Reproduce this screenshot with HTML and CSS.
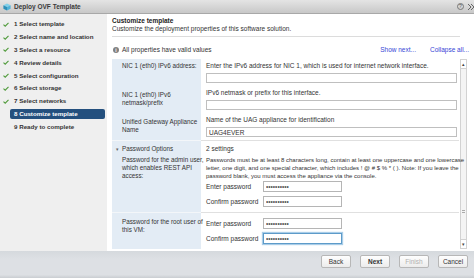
FILE: index.html
```html
<!DOCTYPE html>
<html lang="en">
<head>
    <meta charset="UTF-8">
    <meta name="viewport" content="width=device-width, initial-scale=1.0">
    <title>Deploy OVF Template</title>
    <link rel="stylesheet" href="styles.css">
</head>
<body>
    <div class="window">
        <!-- Title bar -->
        <div class="titlebar">
            <svg class="app-icon" viewBox="0 0 10 10">
                <polygon points="5,0.5 9.5,2.8 5,5 0.5,2.8" fill="#7fd0ea"/>
                <polygon points="0.5,2.8 5,5 5,9.5 0.5,7.2" fill="#2e8fb8"/>
                <polygon points="9.5,2.8 5,5 5,9.5 9.5,7.2" fill="#4fb2d8"/>
            </svg>
            <span class="title">Deploy OVF Template</span>
            <div class="title-tools">
                <span class="help">?</span>
                <svg class="pin" viewBox="0 0 10 8">
                    <path d="M1 1 L4 4 L1 7 M4 1 L7 4 L4 7 M8.5 1 V7" fill="none" stroke="#666" stroke-width="1"/>
                </svg>
            </div>
        </div>

        <div class="main">
            <!-- Wizard steps -->
            <ul class="steps">
                <li><span class="check"><svg viewBox="0 0 6 5"><path d="M0.5 2.6 L2.2 4.2 L5.5 0.8" fill="none" stroke="#4f9a3a" stroke-width="1.1"/></svg></span><span class="step">1 Select template</span></li>
                <li><span class="check"><svg viewBox="0 0 6 5"><path d="M0.5 2.6 L2.2 4.2 L5.5 0.8" fill="none" stroke="#4f9a3a" stroke-width="1.1"/></svg></span><span class="step">2 Select name and location</span></li>
                <li><span class="check"><svg viewBox="0 0 6 5"><path d="M0.5 2.6 L2.2 4.2 L5.5 0.8" fill="none" stroke="#4f9a3a" stroke-width="1.1"/></svg></span><span class="step">3 Select a resource</span></li>
                <li><span class="check"><svg viewBox="0 0 6 5"><path d="M0.5 2.6 L2.2 4.2 L5.5 0.8" fill="none" stroke="#4f9a3a" stroke-width="1.1"/></svg></span><span class="step">4 Review details</span></li>
                <li><span class="check"><svg viewBox="0 0 6 5"><path d="M0.5 2.6 L2.2 4.2 L5.5 0.8" fill="none" stroke="#4f9a3a" stroke-width="1.1"/></svg></span><span class="step">5 Select configuration</span></li>
                <li><span class="check"><svg viewBox="0 0 6 5"><path d="M0.5 2.6 L2.2 4.2 L5.5 0.8" fill="none" stroke="#4f9a3a" stroke-width="1.1"/></svg></span><span class="step">6 Select storage</span></li>
                <li><span class="check"><svg viewBox="0 0 6 5"><path d="M0.5 2.6 L2.2 4.2 L5.5 0.8" fill="none" stroke="#4f9a3a" stroke-width="1.1"/></svg></span><span class="step">7 Select networks</span></li>
                <li class="current"><span class="check"></span><span class="step">8 Customize template</span></li>
                <li><span class="check"></span><span class="step">9 Ready to complete</span></li>
            </ul>

            <!-- Step content -->
            <div class="content">
                <div class="page-head">
                    <div class="page-title">Customize template</div>
                    <div class="page-sub">Customize the deployment properties of this software solution.</div>
                </div>

                <div class="toolbar">
                    <span class="info-icon">i</span>
                    <span>All properties have valid values</span>
                    <a class="link push">Show next...</a>
                    <a class="link">Collapse all...</a>
                </div>

                <div class="props">
                    <div class="grid">
                        <div class="label">NIC 1 (eth0) IPv6 address:</div>
                        <div class="field">
                            <div class="desc">Enter the IPv6 address for NIC 1, which is used for internet network interface.</div>
                            <input class="text-input" type="text" value="">
                        </div>

                        <div class="label low">NIC 1 (eth0) IPv6<br>netmask/prefix</div>
                        <div class="field">
                            <div class="desc">IPv6 netmask or prefix for this interface.</div>
                            <input class="text-input" type="text" value="">
                        </div>

                        <div class="label low">Unified Gateway Appliance<br>Name</div>
                        <div class="field">
                            <div class="desc">Name of the UAG appliance for identification</div>
                            <input class="text-input" type="text" value="UAG4EVER">
                        </div>

                        <div class="label group sep"><span class="arrow">&#9662;</span>Password Options</div>
                        <div class="field group sep">2 settings</div>

                        <div class="label sub">Password for the admin user,<br>which enables REST API<br>access:</div>
                        <div class="field sub">
                            <div class="desc long">Passwords must be at least 8 characters long, contain at least one uppercase and one lowercase</div>
                            <div class="desc long">letter, one digit, and one special character, which includes ! @ # $ % * ( ). Note: If you leave the</div>
                            <div class="desc long">password blank, you must access the appliance via the console.</div>
                            <div class="pwd-row">
                                <span class="pwd-label">Enter password</span>
                                <input class="pwd-input" type="password" value="xxxxxxxxxx">
                            </div>
                            <div class="pwd-row">
                                <span class="pwd-label">Confirm password</span>
                                <input class="pwd-input" type="password" value="xxxxxxxxxx">
                            </div>
                        </div>

                        <div class="label sub sep">Password for the root user of<br>this VM:</div>
                        <div class="field sub sep">
                            <div class="pwd-row">
                                <span class="pwd-label">Enter password</span>
                                <input class="pwd-input" type="password" value="xxxxxxxxxx">
                            </div>
                            <div class="pwd-row">
                                <span class="pwd-label">Confirm password</span>
                                <input class="pwd-input focused" type="password" value="xxxxxxxxxx">
                            </div>
                        </div>
                    </div>

                    <div class="scrollbar">
                        <span class="sb-arrow">&#9652;</span>
                        <span class="sb-track"><span class="sb-grip"></span></span>
                        <span class="sb-arrow">&#9662;</span>
                    </div>
                </div>
            </div>
        </div>

        <!-- Wizard buttons -->
        <div class="footer">
            <button class="btn">Back</button>
            <button class="btn primary">Next</button>
            <button class="btn" disabled>Finish</button>
            <button class="btn">Cancel</button>
        </div>
    </div>
</body>
</html>
```

FILE: styles.css
```css
* {
    box-sizing: border-box;
}
body {
    margin: 0;
    font-family: "Liberation Sans", Arial, sans-serif;
    font-size: 6.5px;
    line-height: 8px;
    color: #333;
    background-color: #fff;
}
.window {
    width: 474px;
    height: 278px;
    display: flex;
    flex-direction: column;
    overflow: hidden;
}

/* title bar */
.titlebar {
    height: 14px;
    display: flex;
    align-items: center;
    padding-left: 3px;
    background: linear-gradient(#e4e4e4, #c8c8c8);
    border-bottom: 1px solid #a8a8a8;
}
.app-icon {
    width: 8px;
    height: 8px;
    margin-right: 3px;
}
.title {
    font-weight: bold;
    color: #3a3a3a;
}
.title-tools {
    margin-left: auto;
    display: flex;
    align-items: center;
    gap: 3px;
    margin-right: -3px;
}
.help {
    width: 7px;
    height: 7px;
    border: 1px solid #777;
    border-radius: 50%;
    font-size: 5px;
    line-height: 5px;
    text-align: center;
    color: #555;
}
.pin {
    width: 10px;
    height: 8px;
}

/* layout */
.main {
    flex: 1;
    display: flex;
    min-height: 0;
}

/* steps */
.steps {
    width: 107px;
    margin: 0;
    padding: 4px 0 0;
    list-style: none;
    background-color: #efefef;
}
.steps li {
    height: 12.8px;
    display: flex;
    align-items: center;
}
.check {
    width: 10px;
    display: flex;
    padding-left: 3px;
}
.check svg {
    width: 6px;
    height: 5px;
}
.step {
    flex: 1;
    height: 10px;
    line-height: 10px;
    padding-left: 4px;
    margin-right: 2px;
    font-size: 6.2px;
    font-weight: bold;
    color: #333;
}
.steps li.current .step {
    background-color: #24507e;
    color: #fff;
    border-radius: 2px;
}

/* content */
.content {
    flex: 1;
    display: flex;
    flex-direction: column;
    padding-left: 5px;
    min-width: 0;
}
.page-head {
    padding: 3px 0 3px;
    margin-right: 14px;
    border-bottom: 1px solid #dcdcdc;
}
.page-title {
    font-weight: bold;
    color: #222;
}
.toolbar {
    display: flex;
    align-items: center;
    padding: 9px 0 5px;
    margin-right: 5px;
}
.info-icon {
    width: 6px;
    height: 6px;
    margin: 0 3px 0 1px;
    border-radius: 50%;
    background-color: #808080;
    color: #fff;
    font-size: 5px;
    font-weight: bold;
    line-height: 6px;
    text-align: center;
}
.link {
    color: #3646d6;
    margin-left: 14px;
}
.link.push {
    margin-left: auto;
}

/* property grid */
.props {
    height: 190px;
    display: flex;
    margin-right: 6px;
    overflow: hidden;
}
.grid {
    width: 347px;
    flex: none;
    display: grid;
    grid-template-columns: 89px 1fr;
    align-content: start;
    background: linear-gradient(to right, #e3ecf5 89px, #fff 89px);
}
.label {
    padding: 3px 0 3px 10px;
    background-color: #e3ecf5;
    white-space: nowrap;
    font-size: 6.3px;
}
.label.low {
    padding-top: 5px;
}
.field {
    padding: 3px 2px 3px 5px;
    min-width: 0;
}
.desc.long {
    position: relative;
    z-index: 1;
    white-space: nowrap;
    font-size: 6px;
}
.text-input {
    display: block;
    width: 100%;
    height: 10px;
    margin: 3px 0 0;
    padding: 0 2px;
    border: 1px solid #bfbfbf;
    font-family: inherit;
    font-size: 6.5px;
    color: #333;
    outline: none;
}
.label.group,
.field.group {
    padding-top: 4px;
    padding-bottom: 2px;
}
.arrow {
    margin-left: -6px;
    width: 6px;
    display: inline-block;
    font-size: 5px;
    color: #666;
}
.label.sub,
.field.sub {
    padding-top: 1px;
    padding-bottom: 5px;
}
.label.sep {
    border-top: 1px solid #f3f6f9;
}
.field.sep {
    border-top: 1px solid #e0e0e0;
}
.label.sub.sep,
.field.sub.sep {
    padding-top: 5px;
    padding-bottom: 3px;
}
.pwd-row {
    display: flex;
    align-items: center;
    margin-top: 1px;
}
.pwd-row + .pwd-row {
    margin-top: 4px;
}
.field.sep .pwd-row:first-child {
    margin-top: 0;
}
.pwd-label {
    width: 57px;
}
.pwd-input {
    width: 79px;
    height: 11px;
    padding: 0 2px;
    border: 1px solid #b5b5b5;
    font-size: 6.5px;
    color: #555;
    outline: none;
}
.pwd-input.focused {
    border-color: #5d9bc9;
    box-shadow: 0 0 1px 1px #a9cde8;
}

/* scrollbar */
.scrollbar {
    width: 7px;
    margin-left: 1px;
    display: flex;
    flex-direction: column;
    border: 1px solid #d2d2d2;
    background-color: #f4f4f4;
}
.sb-arrow {
    height: 9px;
    font-size: 5px;
    line-height: 9px;
    text-align: center;
    color: #444;
    background-color: #fff;
    border-bottom: 1px solid #d2d2d2;
}
.sb-arrow:last-child {
    border-bottom: none;
    border-top: 1px solid #d2d2d2;
}
.sb-track {
    flex: 1;
    display: flex;
    flex-direction: column;
    justify-content: flex-end;
    align-items: center;
    padding-bottom: 26px;
}
.sb-grip {
    width: 3px;
    height: 3px;
    border-top: 1px solid #aaa;
    border-bottom: 1px solid #aaa;
}

/* footer */
.footer {
    height: 27px;
    display: flex;
    justify-content: flex-end;
    align-items: flex-start;
    gap: 9px;
    padding: 4px 6px 0 0;
    background: linear-gradient(#d5d9dd, #dde0e4 30%, #dde0e4 88%, #c9cdd1);
}
.btn {
    width: 30px;
    height: 13px;
    padding: 0;
    border: 1px solid #b7b7b7;
    border-radius: 2px;
    background: linear-gradient(#fefefe, #ececec);
    font-family: inherit;
    font-size: 6.5px;
    color: #333;
}
.btn.primary {
    font-weight: bold;
}
.btn:disabled {
    color: #b0b0b0;
}
```
